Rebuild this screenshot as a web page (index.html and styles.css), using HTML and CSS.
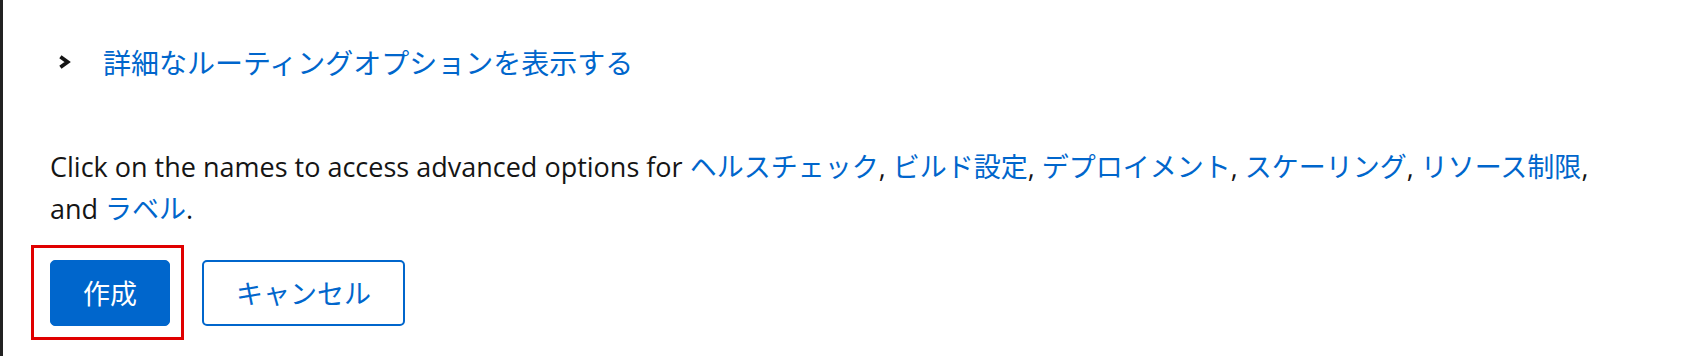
FILE: index.html
```html
<!DOCTYPE html>
<html lang="ja">
<head>
<meta charset="utf-8">
<link rel="stylesheet" href="styles.css">
</head>
<body>
<div class="page">
  <div class="expand">
    <button class="toggle" type="button">
      <span class="toggle-icon">
        <svg width="13" height="14" viewBox="0 0 13 14"><path d="M2.4 1.8 L9.6 7 L2.4 12.2" fill="none" stroke="#151515" stroke-width="3.8" stroke-linejoin="miter" stroke-miterlimit="4"/></svg>
      </span>
      <span class="toggle-text">詳細なルーティングオプションを表示する</span>
    </button>
  </div>
  <p class="help">Click on the names to access advanced options for <a href="#">ヘルスチェック</a>, <a href="#">ビルド設定</a>, <a href="#">デプロイメント</a>, <a href="#">スケーリング</a>, <a href="#">リソース制限</a>, and <a href="#">ラベル</a>.</p>
  <div class="actions">
    <span class="highlight">
      <button class="btn btn-primary" type="button">作成</button>
    </span>
    <button class="btn btn-secondary" type="button">キャンセル</button>
  </div>
</div>
</body>
</html>
```
FILE: styles.css
```css
html, body {
  margin: 0;
  padding: 0;
  background: #ffffff;
}
body {
  font-family: "Open Sans", "Noto Sans CJK JP", sans-serif;
  font-size: 27px;
  line-height: 1.5;
  color: #151515;
}
.page {
  height: 356px;
  box-sizing: border-box;
  border-left: 3px solid #222222;
  padding: 42px 50px 0 47px;
}
.expand {
  display: flex;
}
.toggle {
  display: flex;
  align-items: center;
  gap: 32px;
  padding: 0 0 0 8px;
  margin: 0;
  border: 0;
  background: none;
  font: inherit;
  cursor: pointer;
}
.toggle-icon {
  display: flex;
  width: 13px;
  height: 14px;
}
.toggle-text {
  font-family: "Noto Sans CJK JP", sans-serif;
  font-size: 28px;
  color: #0066cc;
  line-height: 40px;
}
.help {
  margin: 64px 0 0 0;
}
.help a {
  color: #0066cc;
  text-decoration: none;
  font-family: "Noto Sans CJK JP", sans-serif;
}
.actions {
  display: flex;
  align-items: center;
  gap: 32px;
  margin-top: 31px;
}
.highlight {
  position: relative;
  display: flex;
}
.highlight::after {
  content: "";
  position: absolute;
  left: -19px;
  top: -15px;
  right: -14px;
  bottom: -14px;
  border: 3px solid #e00000;
  pointer-events: none;
}
.btn {
  font-family: "Noto Sans CJK JP", sans-serif;
  font-size: 27px;
  line-height: 40px;
  padding: 12px 32px;
  border-radius: 5px;
  cursor: pointer;
  margin: 0;
}
.btn-primary {
  background: #0066cc;
  color: #ffffff;
  border: 1px solid #0066cc;
}
.btn-secondary {
  background: #ffffff;
  color: #0066cc;
  border: 2px solid #0066cc;
  padding: 11px 32px;
}
```
